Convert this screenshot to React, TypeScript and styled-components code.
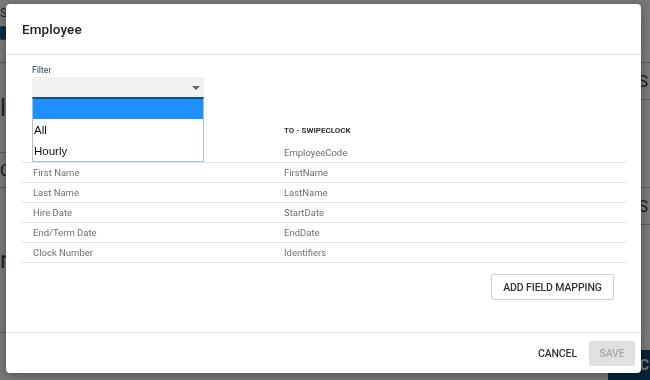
import React from "react";
import styled, { createGlobalStyle } from "styled-components";

const Global = createGlobalStyle`
  html, body { margin: 0; padding: 0; width: 650px; height: 380px; overflow: hidden; }
  body { font-family: Roboto, "Liberation Sans", Arial, sans-serif; background: #fff; }
  * { box-sizing: border-box; }
`;

/* ---------- background page (behind the backdrop) ---------- */
const Page = styled.div`
  width: 650px;
  height: 380px;
  display: grid;
  grid-template-columns: 1fr 1fr;
  background: #fff;
  color: #333;
`;
const PageCol = styled.div<{ $right?: boolean }>`
  display: flex;
  flex-direction: column;
  align-items: ${(p) => (p.$right ? "flex-end" : "flex-start")};
`;
const PageBlock = styled.div<{ $h: number; $line?: boolean; $right?: boolean; $top?: boolean }>`
  height: ${(p) => p.$h}px;
  width: 100%;
  display: flex;
  align-items: ${(p) => (p.$top ? "flex-start" : "center")};
  justify-content: ${(p) => (p.$right ? "flex-end" : "flex-start")};
  padding-right: ${(p) => (p.$right ? "2px" : "0")};
  border-bottom: ${(p) => (p.$line ? "1px solid #bbb" : "none")};
  font-size: 16px;
`;
const PageSmall = styled.span`
  font-size: 12px;
  color: #1e5b86;
`;
const PageDot = styled.span`
  flex: none;
  width: 14px;
  height: 14px;
  border-radius: 50%;
  background: #1e5b86;
  margin: 0 0 0 -4px;
`;
const PageBigText = styled.span`
  font-size: 24px;
  color: #444;
`;
const PageBlueBtn = styled.div`
  width: 42px;
  height: 30px;
  background: #0d4a7a;
  color: #fff;
  font-weight: 700;
  font-size: 14px;
  display: flex;
  align-items: center;
  justify-content: flex-end;
  padding-right: 1px;
`;

/* ---------- backdrop + dialog ---------- */
const Backdrop = styled.div`
  position: fixed;
  inset: 0;
  background: rgba(0, 0, 0, 0.53);
`;

const Dialog = styled.div`
  position: fixed;
  left: 6px;
  top: 4px;
  width: 635px;
  height: 369px;
  background: #fff;
  border-radius: 4px;
  box-shadow: 0 2px 10px rgba(0, 0, 0, 0.35);
  display: flex;
  flex-direction: column;
`;

const Header = styled.div`
  height: 51px;
  flex: none;
  display: flex;
  align-items: center;
  padding: 0 16px;
  border-bottom: 1px solid #e2e2e2;
`;
const Title = styled.h2`
  margin: 0;
  font-size: 13.5px;
  font-weight: 500;
  color: #222;
  letter-spacing: 0.1px;
`;

const Body = styled.div`
  flex: 1;
  padding: 10px 15px 0 16px;
  display: flex;
  flex-direction: column;
`;

const FilterField = styled.div`
  position: relative;
  margin-left: 10px;
  width: 172px;
  display: flex;
  flex-direction: column;
  gap: 2px;
`;
const FilterLabel = styled.label`
  font-size: 8.5px;
  color: #4d6a85;
  font-weight: 500;
  line-height: 10px;
`;
const SelectBox = styled.div`
  height: 20px;
  background: #f1f1f1;
  display: flex;
  align-items: center;
  justify-content: flex-end;
  padding-right: 4px;
`;
const Caret = styled.span`
  width: 0;
  height: 0;
  border-left: 4px solid transparent;
  border-right: 4px solid transparent;
  border-top: 4px solid #666;
  margin-top: 2px;
`;
const Menu = styled.ul`
  position: absolute;
  top: 32px;
  left: 0;
  width: 172px;
  margin: 0;
  padding: 0;
  list-style: none;
  background: #fff;
  border: 1px solid #a9c0df;
  border-top: 2px solid #1d4f7c;
  z-index: 2;
  font-family: "Liberation Sans", Arial, sans-serif;
`;
const MenuItem = styled.li<{ $active?: boolean }>`
  height: ${(p) => (p.$active ? "20px" : "21px")};
  display: flex;
  align-items: center;
  padding-left: 1px;
  font-size: 11.5px;
  color: #111;
  background: ${(p) => (p.$active ? "#1e90ff" : "#fff")};
`;

const Table = styled.div`
  margin-top: 26px;
  display: flex;
  flex-direction: column;
`;
const Row = styled.div<{ $head?: boolean }>`
  display: grid;
  grid-template-columns: 262px 1fr;
  height: 20px;
  align-items: center;
  border-bottom: ${(p) => (p.$head ? "none" : "1px solid #e4e4e4")};
`;
const Cell = styled.div<{ $head?: boolean }>`
  padding-left: 11px;
  font-size: ${(p) => (p.$head ? "8px" : "9.5px")};
  font-weight: ${(p) => (p.$head ? 700 : 400)};
  color: ${(p) => (p.$head ? "#333" : "#6f6f6f")};
  margin-top: ${(p) => (p.$head ? "-5px" : "0")};
  &:nth-child(2) {
    padding-left: 0;
  }
`;

const Actions = styled.div`
  display: flex;
  justify-content: flex-end;
  padding: 11px 12px 0 0;
`;
const OutlineButton = styled.button`
  height: 26px;
  width: 123px;
  background: #fff;
  border: 1px solid #cfcfcf;
  border-radius: 2px;
  font-family: Roboto, sans-serif;
  font-size: 10.5px;
  font-weight: 500;
  color: #333;
  letter-spacing: -0.1px;
  padding: 0;
`;

const Footer = styled.div`
  height: 41px;
  flex: none;
  border-top: 1px solid #e6e6e6;
  display: flex;
  align-items: center;
  justify-content: flex-end;
  gap: 6px;
  padding-right: 6px;
`;
const TextButton = styled.button<{ $disabled?: boolean }>`
  height: 25px;
  min-width: 46px;
  padding: 0 6px;
  border: none;
  border-radius: 2px;
  font-family: Roboto, sans-serif;
  font-size: 10.5px;
  font-weight: 500;
  letter-spacing: -0.1px;
  background: ${(p) => (p.$disabled ? "#e0e0e0" : "transparent")};
  color: ${(p) => (p.$disabled ? "#a8a8a8" : "#333")};
`;

/* left column of the first rows sits under the open menu and is not visible */
const rows: [string, string][] = [
  ["", "EmployeeCode"],
  ["First Name", "FirstName"],
  ["Last Name", "LastName"],
  ["Hire Date", "StartDate"],
  ["End/Term Date", "EndDate"],
  ["Clock Number", "Identifiers"],
];

export default function App() {
  return (
    <>
      <Global />
      <Page>
        <PageCol>
          <PageBlock $h={26}>
            <PageSmall>S</PageSmall>
          </PageBlock>
          <PageBlock $h={37} $line $top>
            <PageDot />
          </PageBlock>
          <PageBlock $h={90} $line>
            <PageBigText>li</PageBigText>
          </PageBlock>
          <PageBlock $h={35} $line>C</PageBlock>
          <PageBlock $h={145} $line>
            <PageBigText>r</PageBigText>
          </PageBlock>
        </PageCol>
        <PageCol $right>
          <PageBlock $h={63} $line />
          <PageBlock $h={37} $line $right>S</PageBlock>
          <PageBlock $h={88} $line />
          <PageBlock $h={37} $line $right>S</PageBlock>
          <PageBlock $h={125} />
          <PageBlueBtn>C</PageBlueBtn>
        </PageCol>
      </Page>
      <Backdrop />
      <Dialog role="dialog">
        <Header>
          <Title>Employee</Title>
        </Header>
        <Body>
          <FilterField>
            <FilterLabel>Filter</FilterLabel>
            <SelectBox>
              <Caret />
            </SelectBox>
            <Menu>
              <MenuItem $active>&nbsp;</MenuItem>
              <MenuItem>All</MenuItem>
              <MenuItem>Hourly</MenuItem>
            </Menu>
          </FilterField>
          <Table>
            <Row $head>
              <Cell $head />
              <Cell $head>TO - SWIPECLOCK</Cell>
            </Row>
            {rows.map(([a, b]) => (
              <Row key={b}>
                <Cell>{a}</Cell>
                <Cell>{b}</Cell>
              </Row>
            ))}
          </Table>
          <Actions>
            <OutlineButton>ADD FIELD MAPPING</OutlineButton>
          </Actions>
        </Body>
        <Footer>
          <TextButton>CANCEL</TextButton>
          <TextButton $disabled>SAVE</TextButton>
        </Footer>
      </Dialog>
    </>
  );
}
